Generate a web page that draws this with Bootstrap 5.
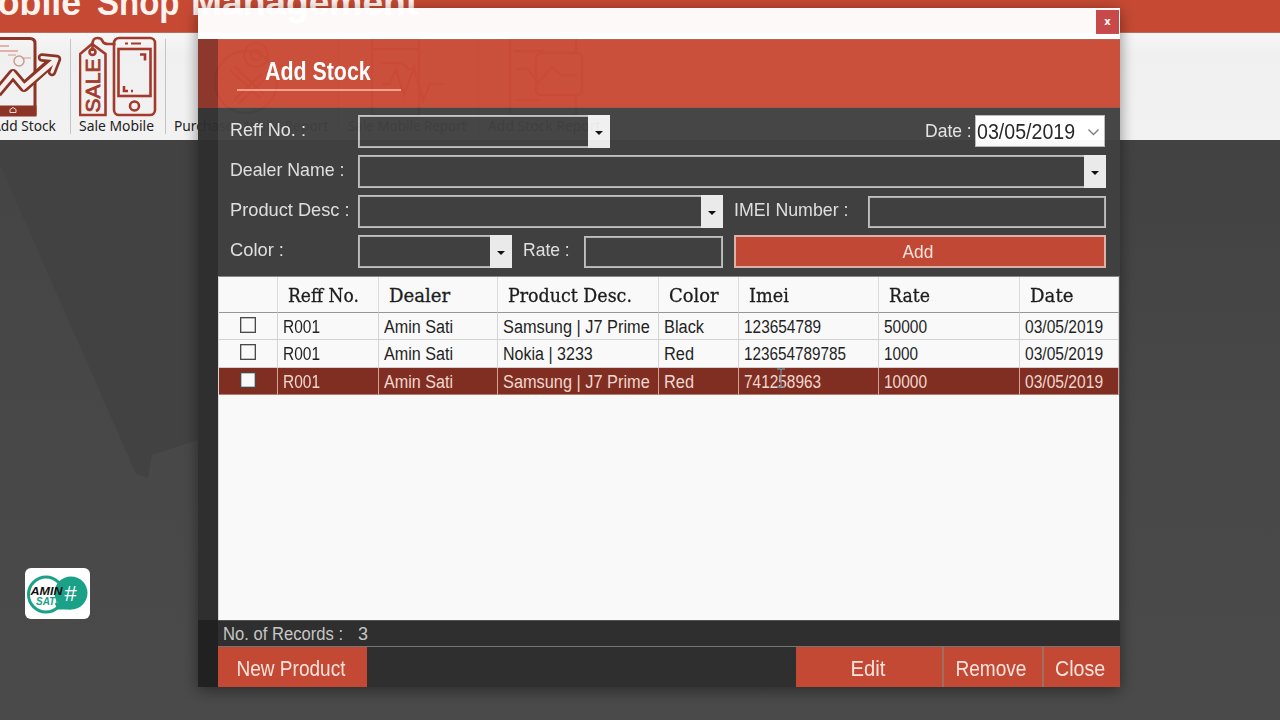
<!DOCTYPE html>
<html lang="en">
<head>
<meta charset="utf-8">
<title>Mobile Shop Management</title>
<link href="https://cdn.jsdelivr.net/npm/bootstrap@5.3.0/dist/css/bootstrap.min.css" rel="stylesheet">
<style>
body{width:1280px;height:720px;overflow:hidden;background:#444;font-family:"Liberation Sans",Arial,sans-serif;position:relative}
[data-w]{display:inline-block;white-space:nowrap;transform-origin:0 50%}
.mid [data-w]{transform-origin:50% 50%}
.apphead{height:33px;background:#c64a33;border-bottom:1px solid #b5705f;overflow:hidden}
.apptitle{position:absolute;top:-22px;font-size:37px;line-height:50px;font-weight:700;color:#fff3ef}
.tools{height:107px;background:linear-gradient(#f6f6f6,#f0f0f0 20%,#f2f2f2)}
.tool{height:107px;font:15px/18px "Noto Sans",sans-serif;color:#222;padding-top:3px}
.tool+.tool{border-left:1px solid #c4c4c4;border-image:linear-gradient(transparent 6%,#c4c4c4 6%,#c4c4c4 94%,transparent 94%) 1}
.tool svg{display:block;width:96px;height:82px;margin-bottom:-2px}
.canvas{height:580px}
.canvas svg{display:block}
.logo{position:absolute;left:25px;top:568px;width:65px;height:51px}
.win{position:absolute;left:198px;top:8px;width:922px;height:679px;opacity:.972;box-shadow:0 3px 14px rgba(0,0,0,.45);background:#414141}
.tbar{height:31px;background:#fff;padding:2px 1px 0 0}
.xbtn{width:23px;height:24px;background:#c84a4c;color:#fff;font:700 10px/22px "DejaVu Sans",sans-serif;border:0;padding:0;text-align:center}
.strip{width:20px;background:linear-gradient(#8a3226 69px,#2f2f2f 69px,#2f2f2f 581px,#212121 581px)}
.band{height:69px;background:#ca4b36;border-top:1px solid #b0604f;border-bottom:1px solid #9a5547}
.band .ttl{margin:14px 0 0 19px;padding-left:28px;width:164px;height:37px;border-bottom:2px solid #ff9d8b;color:#fff;font-weight:700;font-size:25px;line-height:35px}
.form{height:168px;padding:7px 14px 0 12px;color:#e4e4e4;font-size:19px}
.line{height:33px;margin-bottom:7px}
.lbl{line-height:30px;flex:none;height:33px}
.l1{width:128px}
.box{height:33px;border:1px solid #c4c4c4;box-shadow:inset 0 0 0 1px #b4b4b4;background:#404040}
.combo{padding:0;display:flex;justify-content:flex-end;align-items:stretch}
.combo i{width:22px;margin:-1px;background:#f0f0f0;display:flex;align-items:center;justify-content:center}
.combo i::after{content:"";border:4px solid transparent;border-top-color:#111;border-bottom:0;margin-top:2px}
.input{height:32px;align-self:center}
.date{width:130px;height:32px;background:#fff;color:#222;font-size:22px;line-height:32px;padding:2px 5px 0 1px;border:1px solid #bbb}
.go{border:2px solid #e0b5ac;background:#c64934;color:#ffe9e2;font-size:19px;line-height:28px;text-align:center;border-radius:0;padding:0}
.grid{height:344px;background:#fff;border-left:1px solid #ddd;border-top:1px solid #8a8a8a;border-right:1px solid #555}
.grid table{table-layout:fixed;width:900px;border-collapse:separate;border-spacing:0}
.grid th{height:36px;padding:1px 0 0 10px;font:400 19px/29px "DejaVu Serif",serif;color:#1c1c1c;-webkit-text-stroke:.3px #1c1c1c;border-right:1px solid #e0e0e0;border-bottom:1px solid #999}
.grid td{height:27.33px;padding:2px 0 0 5px;line-height:24px;font-size:18px;color:#1f1f1f;border-right:1px solid #dadada;border-bottom:1px solid #d6d6d6;overflow:hidden;white-space:nowrap}
.grid td>[data-w]{vertical-align:top;margin-top:1px;line-height:23px}
.grid tr.sel td{background:#822e20;color:#f8dcd5;border-right-color:#dba79c;border-bottom-color:#b9806f}
.chk{display:block;width:16px;height:16px;margin:-4px 0 0 16px;border:1px solid #4a4a4a;box-shadow:inset 0 0 0 .5px #888;background:#fff}
.rec{height:26px;background:#2f2f2f;color:#cbcbcb;font-size:18px;line-height:27px;padding-left:5px;border-top:1px solid #555}
.foot{height:41px;background:#2f2f2f;border-top:1px solid #777}
.fb{height:40px;border:0;border-radius:0;background:#c84a35;color:#ffe9e2;font-size:22px;line-height:40px;text-align:center;padding:2px 0 0}
.fb+.fb{border-left:2px solid #a3705f}
.caret{position:absolute;left:775px;top:368px}
</style>
</head>
<body>
<header class="apphead">
  <span class="apptitle" style="left:-32px" data-w="113">Mobile</span>
  <span class="apptitle" style="left:97px" data-w="82">Shop</span>
  <span class="apptitle" style="left:191px" data-w="227">Management</span>
</header>
<nav class="tools d-flex">
  <div class="tool" style="width:70px;padding-left:0">
    <svg viewBox="0 0 96 82" fill="none" stroke="#8c3426" stroke-width="3">
      <path d="M-10 2.500H30q5 0 5 5V78h-45"/><path d="M-5 71h40v8h-40z" fill="#8c3426"/>
      <path d="M-5 10h14M-5 15h23" stroke="#cf7768" stroke-width="1"/><circle cx="19" cy="25" r="5" stroke="#c99a92" stroke-width="1.500"/><path d="M8 19h8M22 22h9" stroke="#cf9a90" stroke-width="1"/>
      <path d="M-3 57 13 38 24 51 54 24" stroke-width="10" stroke-linejoin="round"/><path d="M42 21.500 57 23 52 36" stroke-width="8.500" stroke-linecap="round" stroke-linejoin="round"/>
      <path d="M-3 57 13 38 24 51 56 23.500" stroke="#f4f0ee" stroke-width="4.500"/><path d="M42 21.500 57 23 52 36" stroke="#f4f0ee" stroke-width="3.200" stroke-linecap="round" stroke-linejoin="round"/>
      <path d="M10 76.500v-3l3-2 3 2v3z" stroke="#f2dcd7" stroke-width="1"/>
    </svg><span data-w="64" style="margin-left:-8px">Add Stock</span></div>
  <div class="tool" style="width:95px;padding-left:8px">
    <svg viewBox="0 0 96 82" fill="none" stroke="#a33a2c" stroke-width="2.600">
      <path d="M1 79V18L13 8 26.500 18V79z"/><circle cx="13.500" cy="16" r="3"/><path d="M13.500 15V8q0-6 5-6 4 0 5 3t6 3h7"/>
      <text transform="translate(21 76.500) rotate(-90)" font-family="Liberation Sans" font-size="21" font-weight="400" stroke-width=".8" fill="#a33a2c" textLength="54" lengthAdjust="spacing">SALE</text>
      <rect x="35" y="2" width="41" height="77" rx="5"/><rect x="39.500" y="13" width="32" height="47"/><path d="M46 7.500h3M52 7.500h10" stroke-width="2.200"/><circle cx="55.500" cy="70" r="4.500"/>
      <path d="M61 18.500h5v6M45 50v5h4M52 55h2"/>
    </svg><span data-w="75">Sale Mobile</span></div>
  <div class="tool" style="width:173px;padding-left:8px">
    <svg viewBox="0 0 96 82" fill="none" stroke="#a33a2c" stroke-width="2.500" opacity=".75" style="margin-left:36px">
      <circle cx="36" cy="46" r="31"/><circle cx="46" cy="19" r="12"/><circle cx="46" cy="19" r="5"/><path d="m20 34 30 28M24 30l30 28M52 38 24 64M56 42 28 68"/></svg><span data-w="154">Purchase Mobile Report</span></div>
  <div class="tool" style="width:140px;padding-left:9px">
    <svg viewBox="0 0 96 82" fill="none" stroke="#a33a2c" stroke-width="2.500" opacity=".75" style="margin-left:22px"><rect x="2" y="3" width="47" height="76"/><path d="M2 13h47M10 27h22l8 7M12 48h7l7-14 8 25 10-28 9 34 7-17h14"/></svg><span data-w="119">Sale Mobile Report</span></div>
  <div class="tool" style="width:140px;padding-left:9px">
    <svg viewBox="0 0 96 82" fill="none" stroke="#a33a2c" stroke-width="2.500" opacity=".75" style="margin-left:20px"><path d="M68 17V3H2v76h66V60M6 15h30M8 33h12l10 14 14-16 9 8h16M8 64h24"/><rect x="28" y="17" width="46" height="42" rx="5"/></svg><span data-w="112">Add Stock Report</span></div>
</nav>
<main class="canvas"><svg width="1280" height="580"><defs><linearGradient id="sh" x2="0" y2="1"><stop offset="0" stop-color="#454545"/><stop offset=".7" stop-color="#494949"/><stop offset="1" stop-color="#4a4a4a"/></linearGradient><linearGradient id="rt" x2="0" y2="1"><stop offset="0" stop-color="#424242"/><stop offset=".5" stop-color="#484848"/><stop offset="1" stop-color="#4a4a4a"/></linearGradient></defs><rect width="1280" height="580" fill="#424242"/><rect x="700" width="580" height="580" fill="url(#rt)"/><path d="M0 25 136 334 148 338 152 315 198 300 700 300V580H0z" fill="url(#sh)"/></svg></main>

<svg class="logo" viewBox="0 0 65 51"><rect width="65" height="51" rx="6" fill="#fff"/><circle cx="21" cy="26.500" r="17.500" fill="#fff" stroke="#1ba187" stroke-width="3"/><circle cx="46" cy="25" r="16.500" fill="#1ba187"/><path d="M30 35h16v6.500H32z" fill="#1ba187"/><text x="5.500" y="27" font-family="Liberation Sans" font-style="italic" font-weight="700" font-size="11" textLength="32" lengthAdjust="spacingAndGlyphs" fill="#111">AMIN</text><text x="11" y="37" font-family="Liberation Sans" font-style="italic" font-weight="700" font-size="10" textLength="22" lengthAdjust="spacingAndGlyphs" fill="#1ba187">SATI</text><text x="39.500" y="33" font-family="Liberation Sans" font-size="22" fill="#fff">#</text></svg>

<section class="win d-flex flex-column">
  <div class="tbar d-flex justify-content-end"><button class="xbtn">x</button></div>
  <div class="d-flex flex-grow-1">
    <div class="strip"></div>
    <div class="flex-grow-1">
      <div class="band d-flex"><div class="ttl"><span data-w="106">Add Stock</span></div></div>
      <div class="form">
        <div class="line d-flex"><span class="lbl l1"><span data-w="76">Reff No. :</span></span><div class="box combo" style="width:252px"><i></i></div><span class="lbl ms-auto" style="width:50px;padding-top:1px"><span data-w="47">Date :</span></span><div class="date d-flex justify-content-between align-items-center" style="margin-right:1px"><span data-w="98">03/05/2019</span><svg width="11" height="7" viewBox="0 0 11 7" style="flex:none;margin-left:-20px"><path d="m.5.5 5 5 5-5" fill="none" stroke="#777" stroke-width="1.300"/></svg></div></div>
        <div class="line d-flex"><span class="lbl l1"><span data-w="115">Dealer Name :</span></span><div class="box combo flex-grow-1"><i></i></div></div>
        <div class="line d-flex"><span class="lbl l1"><span data-w="120">Product Desc :</span></span><div class="box combo" style="width:365px"><i></i></div><span class="lbl" style="width:145px;padding-left:11px"><span data-w="114">IMEI Number :</span></span><div class="box input flex-grow-1"></div></div>
        <div class="line d-flex"><span class="lbl l1"><span data-w="54">Color :</span></span><div class="box combo" style="width:154px"><i></i></div><span class="lbl" style="width:72px;padding-left:11px"><span data-w="47">Rate :</span></span><div class="box input" style="width:139px"></div><button class="btn go mid flex-grow-1" style="margin-left:11px;padding-right:4px"><span data-w="31">Add</span></button></div>
      </div>
      <div class="grid">
        <table>
          <colgroup><col style="width:59px"><col style="width:101px"><col style="width:119px"><col style="width:161px"><col style="width:80px"><col style="width:140px"><col style="width:141px"><col style="width:99px"></colgroup>
          <thead><tr><th></th><th><span data-w="71">Reff No.</span></th><th><span data-w="61">Dealer</span></th><th><span data-w="124">Product Desc.</span></th><th><span data-w="50">Color</span></th><th><span data-w="40">Imei</span></th><th><span data-w="41">Rate</span></th><th><span data-w="43">Date</span></th></tr></thead>
          <tbody>
          <tr><td><span class="chk"></span></td><td><span data-w="37">R001</span></td><td><span data-w="69">Amin Sati</span></td><td><span data-w="147">Samsung | J7 Prime</span></td><td><span data-w="40">Black</span></td><td><span data-w="77">123654789</span></td><td><span data-w="43">50000</span></td><td><span data-w="78">03/05/2019</span></td></tr>
          <tr><td><span class="chk"></span></td><td><span data-w="37">R001</span></td><td><span data-w="69">Amin Sati</span></td><td><span data-w="90">Nokia | 3233</span></td><td><span data-w="30">Red</span></td><td><span data-w="102">123654789785</span></td><td><span data-w="34">1000</span></td><td><span data-w="78">03/05/2019</span></td></tr>
          <tr class="sel"><td><span class="chk"></span></td><td><span data-w="37">R001</span></td><td><span data-w="69">Amin Sati</span></td><td><span data-w="147">Samsung | J7 Prime</span></td><td><span data-w="30">Red</span></td><td><span data-w="77">741258963</span></td><td><span data-w="43">10000</span></td><td><span data-w="78">03/05/2019</span></td></tr>
          </tbody>
        </table>
      </div>
      <div class="rec d-flex"><div style="width:135px"><span data-w="120">No. of Records :</span></div><span data-w="10">3</span></div>
      <div class="foot d-flex"><button class="fb mid" style="width:149px;padding-right:3px"><span data-w="109">New Product</span></button><button class="fb mid ms-auto" style="width:146px;border-left:0;padding-right:2px"><span data-w="35">Edit</span></button><button class="fb mid" style="width:100px;padding-right:4px"><span data-w="71">Remove</span></button><button class="fb mid" style="width:78px;padding-right:3px"><span data-w="50">Close</span></button></div>
    </div>
  </div>
</section>
<svg class="caret" width="12" height="20" viewBox="0 0 12 20" fill="none" stroke="#79868c" stroke-width="1.300"><path d="M2 1h3l1 1 1-1h3M6 2v16M2 19h3l1-1 1 1h3"/></svg>
<script src="https://cdn.jsdelivr.net/npm/bootstrap@5.3.0/dist/js/bootstrap.bundle.min.js"></script>
<script>
// Condense each label to its design width
document.querySelectorAll('[data-w]').forEach(function(e){
  e.style.transform='scaleX('+(e.dataset.w/e.offsetWidth)+')';
});
</script>
</body>
</html>
